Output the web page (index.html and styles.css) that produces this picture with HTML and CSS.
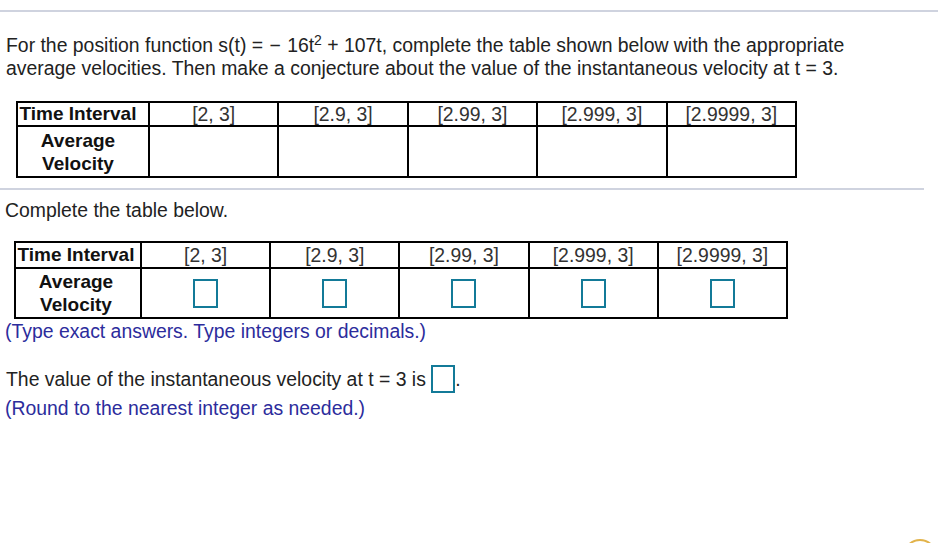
FILE: index.html
```html
<!DOCTYPE html>
<html>
<head>
<meta charset="utf-8">
<link rel="stylesheet" href="styles.css">
</head>
<body>
<div class="page">
  <div class="rule rule-top"></div>
  <p class="question">For the position function s(t) = <span class="op">&minus;</span> 16t<sup>2</sup> + 107t, complete the table shown below with the appropriate average velocities. Then make a conjecture about the value of the instantaneous velocity at t = 3.</p>

  <table class="vt vt1">
    <tr class="hdr">
      <th>Time Interval</th>
      <td>[2, 3]</td><td>[2.9, 3]</td><td>[2.99, 3]</td><td>[2.999, 3]</td><td>[2.9999, 3]</td>
    </tr>
    <tr class="vel">
      <th>Average<br>Velocity</th>
      <td></td><td></td><td></td><td></td><td></td>
    </tr>
  </table>

  <div class="rule rule-mid"></div>

  <p class="line complete">Complete the table below.</p>

  <table class="vt vt2">
    <tr class="hdr">
      <th>Time Interval</th>
      <td>[2, 3]</td><td>[2.9, 3]</td><td>[2.99, 3]</td><td>[2.999, 3]</td><td>[2.9999, 3]</td>
    </tr>
    <tr class="vel">
      <th>Average<br>Velocity</th>
      <td><span class="box"></span></td>
      <td><span class="box"></span></td>
      <td><span class="box"></span></td>
      <td><span class="box"></span></td>
      <td><span class="box"></span></td>
    </tr>
  </table>
  <p class="line hint first-hint">(Type exact answers. Type integers or decimals.)</p>

  <p class="line answer">The value of the instantaneous velocity at t = 3 is <span class="box inline"></span>.</p>
  <p class="line hint round">(Round to the nearest integer as needed.)</p>
</div>
<div class="corner"><div class="corner-ring"></div></div>
</body>
</html>
```

FILE: styles.css
```css
html, body {
  margin: 0;
  padding: 0;
  background: #fff;
}
body {
  font-family: "Liberation Sans", Arial, sans-serif;
  font-size: 19.4px;
  color: #222;
  width: 938px;
  height: 543px;
  overflow: hidden;
  position: relative;
}
.page {
  display: flex;
  flex-direction: column;
  align-items: flex-start;
}
.rule {
  height: 2px;
  background: #cfd3df;
  flex-shrink: 0;
}
.rule-top {
  margin-top: 10px;
  width: 938px;
}
.rule-mid {
  margin-top: 10px;
  width: 924px;
}
.question {
  margin: 22px 0 0 0;
  padding-left: 6px;
  line-height: 23px;
  width: 880px;
}
.question sup {
  font-size: 14px;
  line-height: 0;
  vertical-align: 7px;
}
.op {
  padding: 0 1px;
}
.line {
  margin: 0;
  padding-left: 5px;
  line-height: 23px;
}
.complete {
  margin-top: 9px;
}
.hint {
  color: #2c2c9c;
}
.first-hint {
  margin-top: 1px;
}
.answer {
  margin-top: 22px;
  padding-left: 6px;
}
.round {
  margin-top: 4px;
}
.vt {
  border-collapse: collapse;
  table-layout: fixed;
}
.vt th, .vt td {
  border: 2px solid #000;
  padding: 0;
  text-align: center;
  vertical-align: middle;
}
.vt th {
  font-weight: bold;
  font-size: 19px;
  color: #111;
  line-height: 23px;
  white-space: nowrap;
}
.vt td {
  color: #333;
}
.vt1 {
  margin: 21px 0 0 16px;
  width: 781px;
}
.vt1 th { width: 120px; padding-right: 10px; }
.vt1 .hdr th, .vt1 .hdr td { height: 22px; line-height: 22px; }
.vt1 .vel th { height: 49px; }
.vt2 {
  margin: 19px 0 0 14px;
  width: 774px;
}
.vt2 th { width: 120px; padding-right: 4px; }
.vt2 .hdr th, .vt2 .hdr td { height: 24px; line-height: 24px; }
.vt2 .vel th { height: 48px; }
.box {
  display: inline-block;
  width: 21px;
  height: 25px;
  border: 2px solid #137a98;
  vertical-align: middle;
}
.box.inline {
  width: 20px;
  height: 24px;
  vertical-align: -7px;
}
.corner {
  position: absolute;
  left: 903px;
  top: 539px;
  width: 35px;
  height: 4px;
  overflow: hidden;
}
.corner-ring {
  width: 34px;
  height: 34px;
  border: 2px solid #e2b34a;
  border-radius: 50%;
  box-sizing: border-box;
}
```
